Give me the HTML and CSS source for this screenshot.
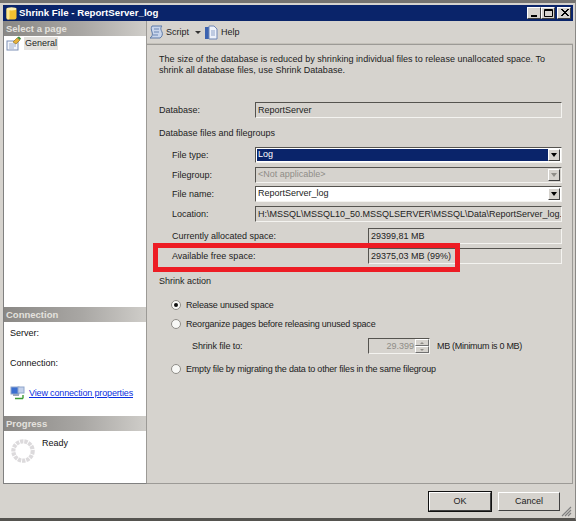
FILE: index.html
```html
<!DOCTYPE html>
<html lang="en">
<head>
<meta charset="utf-8">
<title>Shrink File - ReportServer_log</title>
<link rel="stylesheet" href="styles.css">
</head>
<body>
<div class="window">
  <div class="titlebar">
    <svg class="db-icon" width="11" height="13" viewBox="0 0 11 13"><rect x="0.5" y="1" width="10" height="11.5" rx="2" fill="#f3c131"/><rect x="0.5" y="1" width="3" height="11.5" rx="1.5" fill="#fbe68f"/><ellipse cx="5.5" cy="1.8" rx="5" ry="1.6" fill="#fdf0b0"/></svg>
    <span class="title-text">Shrink File - ReportServer_log</span>
    <div class="win-buttons">
      <span class="win-btn"><svg width="11" height="10" viewBox="0 0 11 10"><rect x="2" y="7" width="6" height="2" fill="#000"/></svg></span>
      <span class="win-btn"><svg width="11" height="10" viewBox="0 0 11 10"><path d="M1.5 1.5h8v7h-8z M1.5 2.5h8" fill="none" stroke="#000"/></svg></span>
      <span class="win-btn win-close"><svg width="11" height="10" viewBox="0 0 11 10"><path d="M2 1l7 7M3 1l7 7M9 1L2 8M10 1L3 8" stroke="#000"/></svg></span>
    </div>
  </div>
  <div class="body">
    <aside class="sidebar">
      <div class="side-section side-pages">
        <div class="side-head">Select a page</div>
        <div class="page-item">
          <svg width="16" height="15" viewBox="0 0 16 15"><rect x="1" y="5" width="11" height="9" fill="#f4f6fb" stroke="#7d8fb5"/><path d="M3 8h7M3 10h7M3 12h5" stroke="#9fb0cf"/><path d="M7 6l4-4 3 2-4 4z" fill="#e8b23a" stroke="#8a6a1c" stroke-width=".6"/><path d="M11 1.5l2-1 2 2-1 1.5z" fill="#3f8a3c"/></svg>
          <span class="page-label">General</span>
        </div>
      </div>
      <div class="side-section side-conn">
        <div class="side-head">Connection</div>
        <div class="conn-body">
          <div class="conn-line">Server:</div>
          <div class="conn-line">Connection:</div>
          <div class="conn-link">
            <svg width="15" height="14" viewBox="0 0 15 14"><rect x="1" y="1" width="8" height="7" fill="#3a6fd0" stroke="#8fa6cc"/><rect x="8" y="1" width="6" height="6" fill="#c4d1ea" stroke="#8fa6cc"/><rect x="3" y="8" width="6" height="2" fill="#9aa6ba"/><path d="M5 12.5h8M13 12.5V9" stroke="#3c9a35" stroke-width="1.4" fill="none"/></svg>
            <a class="link" href="#">View connection properties</a>
          </div>
        </div>
      </div>
      <div class="side-section side-progress">
        <div class="side-head">Progress</div>
        <div class="progress-body">
          <svg width="24" height="24" viewBox="0 0 26 26"><circle cx="13" cy="13" r="10.5" fill="none" stroke="#dcdadc" stroke-width="4.5" stroke-dasharray="3.6 1"/></svg>
          <span class="ready">Ready</span>
        </div>
      </div>
    </aside>
    <main class="main">
      <div class="toolbar">
        <svg width="15" height="15" viewBox="0 0 15 15"><path d="M3 1h10c-2 2-1 4 0 6s0 5-2 6H1c2-1 3-3 2-6S2 3 3 1z" fill="#c9d6ec" stroke="#5d7aa8"/><path d="M5 4h5M5 7h5M4 10h5" stroke="#6b86b3"/></svg>
        <span class="tool-text">Script</span>
        <span class="tool-caret"></span>
        <span class="tool-sep"></span>
        <svg width="14" height="15" viewBox="0 0 14 15"><rect x="1" y="2" width="5" height="12" fill="#3b62b0"/><path d="M5 1h5l3 3v10H5z" fill="#eef2fa" stroke="#6f86b5"/><path d="M7 6h4M7 8h4M7 10h4" stroke="#8fa3c9"/></svg>
        <span class="tool-text tool-help">Help</span>
      </div>
      <div class="panel">
        <p class="intro">The size of the database is reduced by shrinking individual files to release unallocated space. To<br>shrink all database files, use Shrink Database.</p>
        <div class="row row-db">
          <span class="label">Database:</span>
          <span class="field">ReportServer</span>
        </div>
        <div class="heading h-files">Database files and filegroups</div>
        <div class="files">
          <div class="row row-file">
            <span class="label label-in">File type:</span>
            <span class="combo"><span class="combo-text selected">Log</span><span class="arrow"></span></span>
          </div>
          <div class="row row-file">
            <span class="label label-in">Filegroup:</span>
            <span class="combo combo-off"><span class="combo-text">&lt;Not applicable&gt;</span><span class="arrow arrow-off"></span></span>
          </div>
          <div class="row row-file">
            <span class="label label-in">File name:</span>
            <span class="combo"><span class="combo-text">ReportServer_log</span><span class="arrow"></span></span>
          </div>
          <div class="row row-file">
            <span class="label label-in">Location:</span>
            <span class="field field-clip">H:\MSSQL\MSSQL10_50.MSSQLSERVER\MSSQL\Data\ReportServer_log.</span>
          </div>
        </div>
        <div class="space">
          <div class="row row-space">
            <span class="label label-space">Currently allocated space:</span>
            <span class="field">29399,81 MB</span>
          </div>
          <div class="row row-space">
            <span class="label label-space">Available free space:</span>
            <span class="field">29375,03 MB (99%)</span>
          </div>
        </div>
        <div class="heading h-action">Shrink action</div>
        <div class="radio-row r1"><span class="radio checked"></span><span>Release unused space</span></div>
        <div class="radio-row r2"><span class="radio"></span><span>Reorganize pages before releasing unused space</span></div>
        <div class="shrink-row">
          <span class="label-shrink">Shrink file to:</span>
          <span class="spin"><span class="spin-val">29.399</span><span class="spin-btns"><span class="spin-btn"><i class="up"></i></span><span class="spin-btn"><i class="down"></i></span></span></span>
          <span class="spin-note">MB (Minimum is 0 MB)</span>
        </div>
        <div class="radio-row r3"><span class="radio"></span><span>Empty file by migrating the data to other files in the same filegroup</span></div>
      </div>
    </main>
  </div>
  <div class="footer">
    <button class="btn btn-default" type="button">OK</button>
    <button class="btn" type="button">Cancel</button>
    <svg class="grip" width="12" height="12" viewBox="0 0 12 12"><path d="M11 2L2 11M11 5L5 11M11 8L8 11" stroke="#808080" stroke-width="1.2"/></svg>
  </div>
  <div class="highlight"></div>
</div>
</body>
</html>
```
FILE: styles.css
```css
* { box-sizing: border-box; }
html, body { margin: 0; padding: 0; }
body { width: 576px; height: 521px; overflow: hidden; background: #d6d3ce; }
.window {
  position: relative;
  width: 576px; height: 521px;
  background: #d6d3ce;
  border-top: 3px solid #757370;
  border-bottom: 3px solid #55534f;
  border-right: 1px solid #8a8885;
  padding: 2px 2px 0 3px;
  display: flex; flex-direction: column;
  font: 9px/12px "Liberation Sans", Arial, sans-serif;
  color: #222;
}
.titlebar {
  height: 16px; flex: none;
  background: #0a246a;
  color: #fff;
  display: flex; align-items: center;
  padding: 0 2px 0 3px;
  font-weight: 700; font-size: 9.7px;
}
.db-icon { margin-right: 2px; }
.win-buttons { margin-left: auto; display: flex; gap: 0; }
.win-btn {
  width: 14px; height: 12px; background: #d6d3ce;
  border: 1px solid; border-color: #fff #404040 #404040 #fff;
  display: flex; align-items: center; justify-content: center;
}
.win-btn svg { flex: none; }
.win-close { margin-left: 2px; }
.body { flex: 1; display: flex; min-height: 0; }
.sidebar {
  width: 144px; flex: none;
  margin-bottom: 34px;
  background: #fff;
  border-left: 1px solid #808080;
  border-bottom: 1px solid #808080;
  border-right: 1px solid #9c9a96;
  display: flex; flex-direction: column;
}
.side-section { display: flex; flex-direction: column; }
.side-pages { height: 286px; }
.side-conn { height: 109px; }
.side-progress { flex: 1; }
.side-head {
  height: 15px; flex: none;
  background: linear-gradient(90deg, #8a8885, #a9a7a4 55%, #cfcdc9);
  color: #e4e2de;
  font-weight: 700; font-size: 9.5px; line-height: 15px;
  padding-left: 2px;
}
.page-item { display: flex; align-items: center; padding: 0 0 0 2px; gap: 2px; height: 15px; }
.page-label { background: #e4e2de; padding: 0 1px; line-height: 13px; }
.conn-body { padding: 5px 6px 0; color: #111; }
.conn-line { height: 30px; line-height: 12px; padding-top: 0; }
.conn-link { display: flex; align-items: center; gap: 4px; margin-top: -1px; white-space: nowrap; letter-spacing: -.15px; }
.link { color: #0a2ee0; text-decoration: underline; }
.progress-body { display: flex; align-items: flex-start; padding: 8px 0 0 7px; gap: 7px; color: #111; }
.ready { margin-top: -2px; }
.main { flex: 1; display: flex; flex-direction: column; min-width: 0; }
.toolbar {
  height: 23px; flex: none;
  display: flex; align-items: center;
  padding-left: 2px;
  border-bottom: 1px solid #c4c1ba;
}
.tool-text { margin-left: 2px; }
.tool-help { margin-left: 3px; }
.tool-caret {
  width: 0; height: 0; margin-left: 6px;
  border: 3px solid transparent; border-top-color: #333; border-bottom: 0;
}
.tool-sep { width: 3px; }
.panel {
  flex: 1; min-height: 0;
  margin-bottom: 34px;
  border-top: 1px solid #9c9a96;
  border-right: 1px solid #9c9a96;
  border-bottom: 1px solid #9c9a96;
  padding: 9px 10px 0 12px;
}
.intro { margin: 0; line-height: 11px; height: 22px; white-space: nowrap; letter-spacing: .03px; }
.row { display: flex; align-items: center; }
.label { width: 96px; flex: none; }
.label-in { padding-left: 13px; }
.label-space { width: 209px; padding-left: 13px; }
.row-db { margin-top: 26px; height: 16px; }
.row-file { height: 16px; }
.files { margin-top: 8px; display: flex; flex-direction: column; gap: 3.5px; }
.heading { line-height: 12px; }
.h-files { margin-top: 9px; }
.space { margin-top: 6.5px; display: flex; flex-direction: column; gap: 4px; }
.row-space { height: 16px; }
.field {
  flex: 1; min-width: 0; height: 100%;
  border: 1px solid; border-color: #55534f #f4f3f0 #f4f3f0 #55534f;
  background: #d6d3ce;
  padding: 1px 0 0 2px; line-height: 12px;
  white-space: nowrap; overflow: hidden;
}
.combo {
  flex: 1; height: 100%;
  border: 1px solid; border-color: #55534f #f4f3f0 #f4f3f0 #55534f;
  background: #fff;
  display: flex; align-items: stretch; padding: 1px;
}
.combo-text { flex: 1; padding-left: 1px; line-height: 11px; }
.selected { background: #0a246a; color: #fff; }
.arrow {
  width: 12px; flex: none; background: #d6d3ce;
  border: 1px solid; border-color: #fff #404040 #404040 #fff;
  display: flex; align-items: center; justify-content: center;
}
.arrow::after {
  content: ""; width: 0; height: 0;
  border: 3.5px solid transparent; border-top: 4px solid #000; border-bottom: 0;
}
.combo-off { background: #d6d3ce; color: #8f8d88; }
.arrow-off::after { border-top-color: #8f8d88; }
.h-action { margin-top: 11px; }
.radio-row { display: flex; align-items: center; gap: 5px; padding-left: 12px; height: 14px; letter-spacing: -.2px; }
.r1 { margin-top: 11px; }
.r2 { margin-top: 5px; }
.r3 { margin-top: 8px; }
.radio {
  width: 10px; height: 10px; border-radius: 50%; flex: none;
  background: #f8f8f6;
  border: 1px solid #8f8d88;
  display: flex; align-items: center; justify-content: center;
}
.checked::after { content: ""; width: 4px; height: 4px; border-radius: 50%; background: #111; }
.shrink-row { display: flex; align-items: center; height: 16px; margin-top: 7px; padding-left: 33px; }
.label-shrink { width: 176px; flex: none; letter-spacing: -.1px; }
.spin {
  width: 62px; height: 16px; flex: none;
  border: 1px solid; border-color: #55534f #f4f3f0 #f4f3f0 #55534f;
  display: flex;
}
.spin-val { flex: 1; text-align: right; color: #8f8d88; padding-right: 1px; line-height: 14px; }
.spin-btns { width: 14px; display: flex; flex-direction: column; }
.spin-btn {
  flex: 1; background: #d6d3ce;
  border: 1px solid; border-color: #fff #707070 #707070 #fff;
  display: flex; align-items: center; justify-content: center;
}
.spin-btn i { width: 0; height: 0; border: 2px solid transparent; }
.spin-btn .up { border-bottom-color: #8f8d88; border-top: 0; }
.spin-btn .down { border-top-color: #8f8d88; border-bottom: 0; }
.spin-note { margin-left: 7px; letter-spacing: -.3px; }
.footer {
  position: absolute; left: 3px; right: 2px; bottom: 0; height: 34px;
  display: flex; align-items: center; justify-content: flex-end;
  padding-right: 13px; gap: 7px;
}
.btn {
  width: 62px; height: 19px; padding: 0;
  background: #d6d3ce;
  border: 1px solid; border-color: #fff #404040 #404040 #fff;
  font: inherit; color: #222;
}
.btn-default { outline: 1px solid #111; outline-offset: 0; }
.grip { position: absolute; right: 1px; bottom: 1px; }
.highlight {
  position: absolute;
  left: 153px; top: 240px;
  width: 307px; height: 29px;
  border: 5px solid #ed1c24;
  pointer-events: none;
}
```
